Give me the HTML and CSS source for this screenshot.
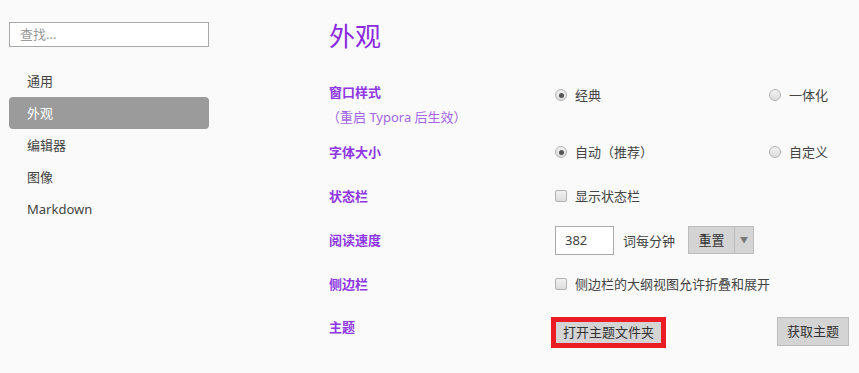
FILE: index.html
```html
<!DOCTYPE html>
<html>
    <head>
        <meta charset="utf-8">
        <title>偏好设置</title>
        <link rel="stylesheet" href="styles.css">
    </head>
    <body>
        <div class="sidebar">
            <div class="search">查找...</div>
            <div class="menu">
                <div class="item">通用</div>
                <div class="item active">外观</div>
                <div class="item">编辑器</div>
                <div class="item">图像</div>
                <div class="item">Markdown</div>
            </div>
        </div>

        <div class="content">
            <h1 class="title">外观</h1>

            <div class="row first">
                <div class="label">
                    <div>窗口样式</div>
                    <div class="hint">（重启 Typora 后生效）</div>
                </div>
                <div class="options">
                    <div class="opt"><span class="radio on"></span>经典</div>
                    <div class="opt"><span class="radio"></span>一体化</div>
                </div>
            </div>

            <div class="row">
                <div class="label">字体大小</div>
                <div class="options">
                    <div class="opt"><span class="radio on"></span>自动（推荐）</div>
                    <div class="opt"><span class="radio"></span>自定义</div>
                </div>
            </div>

            <div class="row">
                <div class="label">状态栏</div>
                <div class="opt"><span class="check"></span>显示状态栏</div>
            </div>

            <div class="row">
                <div class="label">阅读速度</div>
                <div class="speed">
                    <div class="number">382</div>
                    <span>词每分钟</span>
                    <div class="split">
                        <div class="split-main">重置</div>
                        <div class="split-arrow">▼</div>
                    </div>
                </div>
            </div>

            <div class="row">
                <div class="label">侧边栏</div>
                <div class="opt"><span class="check"></span>侧边栏的大纲视图允许折叠和展开</div>
            </div>

            <div class="row theme">
                <div class="label">主题</div>
                <div class="theme-btns">
                    <div class="btn marked">打开主题文件夹</div>
                    <div class="btn">获取主题</div>
                </div>
            </div>
        </div>
    </body>
</html>
```

FILE: styles.css
```css
body{
    margin: 0;
    height: 100vh;
    background-color: #fafafa;
    display: flex;
    font-family: "Noto Sans", "Noto Sans CJK SC", sans-serif;
    font-size: 13px;
    color: #444;
    overflow: hidden;
}

.sidebar{
    width: 200px;
    padding: 22px 0 0 9px;
}

.search{
    height: 25px;
    box-sizing: border-box;
    border: 1px solid #a9a9a9;
    background-color: #fff;
    color: #999;
    line-height: 23px;
    padding-left: 10px;
}

.menu{
    margin-top: 18px;
}

.item{
    height: 32px;
    line-height: 32px;
    padding-left: 18px;
    border-radius: 4px;
}

.item.active{
    background-color: #9b9b9b;
    color: #fff;
}

.content{
    margin-left: 120px;
    width: 520px;
}

.title{
    margin: 18px 0 28px 0;
    font-size: 26px;
    line-height: 36px;
    font-weight: normal;
    color: #8a2be2;
}

.row{
    display: grid;
    grid-template-columns: 226px 294px;
    align-items: center;
    height: 40px;
    margin-bottom: 4px;
}

.row.first{
    align-items: start;
    height: 46px;
}

.label{
    color: #8e38e4;
    font-weight: bold;
    line-height: 20px;
}

.hint{
    font-weight: normal;
    color: #a366e8;
    margin-top: 5px;
    margin-left: -2px;
}

.first .options{
    padding-top: 3px;
}

.options{
    display: grid;
    grid-template-columns: 214px auto;
}

.opt{
    display: flex;
    align-items: center;
    line-height: 20px;
}

.radio,
.check{
    width: 10px;
    height: 10px;
    border: 1px solid #b3b3b3;
    background: linear-gradient(#f2f2f2, #dcdcdc);
    margin-right: 8px;
    display: flex;
    align-items: center;
    justify-content: center;
}

.radio{
    border-radius: 50%;
}

.check{
    border-radius: 2px;
}

.radio.on::after{
    content: "";
    width: 5px;
    height: 5px;
    border-radius: 50%;
    background-color: #555;
}

.speed{
    display: flex;
    align-items: center;
}

.number{
    width: 59px;
    height: 29px;
    box-sizing: border-box;
    border: 1px solid #aaa;
    background-color: #fff;
    line-height: 27px;
    padding-left: 9px;
    margin-right: 9px;
}

.split{
    display: flex;
    height: 28px;
    margin-left: 13px;
    border: 1px solid #bdbdbd;
    background-color: #d4d4d4;
    box-sizing: border-box;
}

.split-main{
    width: 45px;
    line-height: 26px;
    text-align: center;
    border-right: 1px solid #bdbdbd;
    color: #333;
}

.split-arrow{
    width: 18px;
    line-height: 26px;
    text-align: center;
    font-size: 8px;
    color: #777;
}

/* label and buttons sit a bit lower in the last row */
.theme{
    align-items: start;
    padding-top: 9px;
}

.theme-btns{
    display: flex;
    justify-content: space-between;
    align-items: flex-start;
    margin-left: -4px;
}

.btn{
    height: 29px;
    box-sizing: border-box;
    border: 1px solid #bdbdbd;
    background-color: #d4d4d4;
    color: #333;
    line-height: 27px;
    padding: 0 9px;
}

.btn.marked{
    width: 115px;
    height: 31px;
    border: 5px solid #ec1c24;
    line-height: 21px;
    text-align: center;
    padding: 0;
}
```
